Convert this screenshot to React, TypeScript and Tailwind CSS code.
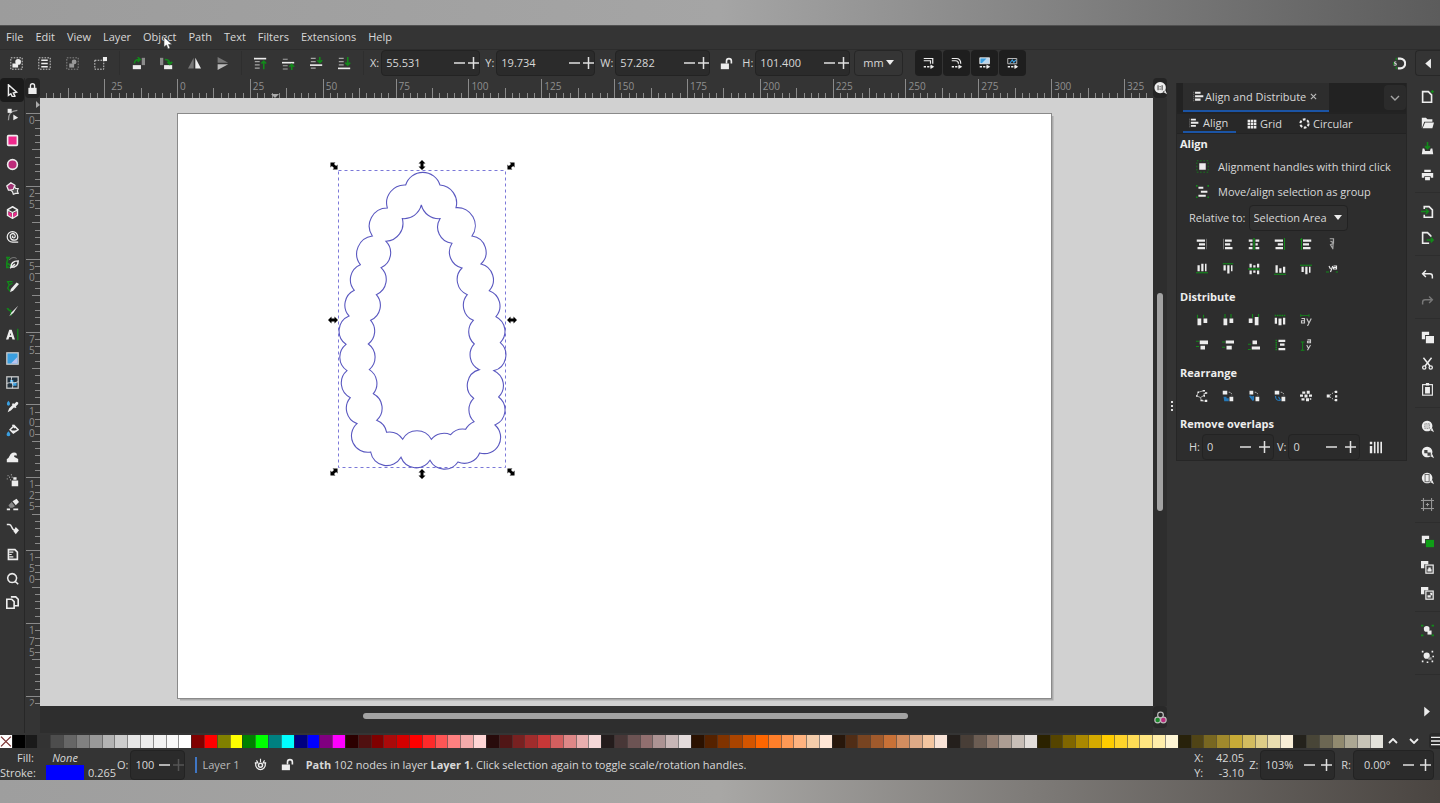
import type { ReactNode } from 'react';

const W = '#ededed';
const G = '#12891a';
const B = '#3a9fe0';
const P = '#f0288c';

const icons: Record<string, ReactNode> = {
  selectAll: (
    <>
      <rect x="1" y="1" width="14" height="14" fill="none" stroke={W} strokeDasharray="2 1.5" />
      <circle cx="10" cy="6" r="3.5" fill={W} />
      <path d="M3 8h7v5H3z" fill={W} />
    </>
  ),
  selectLayers: (
    <>
      <rect x="1" y="1" width="14" height="14" fill="none" stroke={W} strokeDasharray="2 1.5" />
      <path d="M4 3h8v2H4zM4 7h8v2H4zM4 11h8v2H4z" fill={W} />
    </>
  ),
  deselect: (
    <g opacity="0.55">
      <rect x="1" y="1" width="14" height="14" fill="none" stroke={W} strokeDasharray="2 1.5" />
      <circle cx="10" cy="6" r="3" fill={W} />
      <path d="M4 8h6v5H4z" fill={W} />
    </g>
  ),
  touch: (
    <>
      <rect x="1" y="4" width="11" height="11" fill="none" stroke={W} strokeDasharray="2 1.5" />
      <path d="M11 0h5v5h-5z" fill={W} />
    </>
  ),
  rotateLeft: (
    <>
      <path d="M1 10h10v5H1z" fill={W} />
      <path d="M12 1h4v9h-4z" fill="#8a8a8a" />
      <path d="M3 8C3 4 6 3 9 3M7 0l3 3-3 3" fill="none" stroke={G} strokeWidth="2" />
    </>
  ),
  rotateRight: (
    <>
      <path d="M5 10h10v5H5z" fill={W} />
      <path d="M0 1h4v9H0z" fill="#8a8a8a" />
      <path d="M6 3c4 0 6 1 6 5M9 6l3 3 3-3" fill="none" stroke={G} strokeWidth="2" />
    </>
  ),
  flipH: (
    <>
      <path d="M7 1v13H0z" fill="#777" />
      <path d="M9 1v13h7z" fill={W} />
    </>
  ),
  flipV: (
    <>
      <path d="M2 0v7h13z" fill="#777" />
      <path d="M2 16V9h13z" fill="#bbb" />
    </>
  ),
  raiseTop: (
    <>
      <path d="M0 1h15v2H0z" fill={W} />
      <path d="M1 5h6v1.5H1zM1 9h6v1.5H1zM1 13h6v1.5H1z" fill="#a5a5a5" />
      <path d="M12 15V5M9 8l3-3 3 3" fill="none" stroke={G} strokeWidth="2" />
    </>
  ),
  raise: (
    <>
      <path d="M0 6h15v2H0z" fill={W} />
      <path d="M1 2h6v1.5H1zM1 10h6v1.5H1zM1 14h6v1.5H1z" fill="#a5a5a5" />
      <path d="M12 16v-6M9 12l3-3 3 3" fill="none" stroke={G} strokeWidth="2" />
    </>
  ),
  lower: (
    <>
      <path d="M0 9h15v2H0z" fill={W} />
      <path d="M1 1h6v1.5H1zM1 5h6v1.5H1zM1 13h6v1.5H1z" fill="#a5a5a5" />
      <path d="M12 0v7M9 4l3 3 3-3" fill="none" stroke={G} strokeWidth="2" />
    </>
  ),
  lowerBottom: (
    <>
      <path d="M0 13h15v2H0z" fill={W} />
      <path d="M1 1h6v1.5H1zM1 5h6v1.5H1zM1 9h6v1.5H1z" fill="#a5a5a5" />
      <path d="M12 0v10M9 7l3 3 3-3" fill="none" stroke={G} strokeWidth="2" />
    </>
  ),
  unlocked: (
    <>
      <path d="M1 8h10v7H1z" fill={W} />
      <path d="M8 8V5a3 3 0 0 1 6 0v3" fill="none" stroke={W} strokeWidth="2" />
    </>
  ),
  locked: (
    <>
      <path d="M2 7h12v9H2z" fill={W} />
      <path d="M5 8V4a3 3 0 0 1 6 0v4" fill="none" stroke={W} strokeWidth="2" />
    </>
  ),
  scaleStroke: (
    <>
      <path d="M1 2h12v7M1 5h9v4" fill="none" stroke={W} strokeWidth="1.6" />
      <path d="M1 13h10" stroke={W} strokeWidth="2" strokeDasharray="3 1.5" />
      <path d="M10 10l5 3-5 3z" fill={W} />
    </>
  ),
  scaleCorners: (
    <>
      <path d="M1 2h6q6 0 6 7M1 5h5q4 0 4 4" fill="none" stroke={W} strokeWidth="1.6" />
      <path d="M1 13h10" stroke={W} strokeWidth="2" strokeDasharray="3 1.5" />
      <path d="M10 10l5 3-5 3z" fill={W} />
    </>
  ),
  moveGradient: (
    <>
      <path d="M1 1h13v8H1z" fill="#b9d6ee" stroke={W} />
      <path d="M2 2h8L4 8H2z" fill={B} />
      <path d="M1 13h10" stroke={W} strokeWidth="2" strokeDasharray="3 1.5" />
      <path d="M10 10l5 3-5 3z" fill={W} />
    </>
  ),
  movePattern: (
    <>
      <path d="M1 2h12v7H1z" fill="none" stroke="#bbb" strokeWidth="1.3" />
      <path d="M4 8l3-4 2 3 3-3" fill="none" stroke={B} strokeWidth="1.5" />
      <path d="M1 13h10" stroke={W} strokeWidth="2" strokeDasharray="3 1.5" />
      <path d="M10 10l5 3-5 3z" fill={W} />
    </>
  ),
  snap: (
    <>
      <path d="M6 2h3a6 6 0 0 1 0 12H6" fill="none" stroke={W} strokeWidth="2.6" />
      <path d="M4 1v3M4 12v3M1 6v4" stroke={G} strokeWidth="1.5" />
      <path d="M4 6H2v2h2v2H1" fill="none" stroke={W} />
    </>
  ),
  arrowLeft: <path d="M11 2v12L4 8z" fill={W} />,
  arrowRight: <path d="M4 2v12l7-6z" fill={W} />,
  pointer: <path d="M3 1l10 9-4 1 2 4-3 1-2-4-3 2z" fill="none" stroke={W} strokeWidth="1.8" />,
  node: (
    <>
      <path d="M3 15C3 8 5 4 14 3" fill="none" stroke="#999" strokeWidth="1.5" />
      <path d="M2 1h5v5H2z" fill={W} />
      <path d="M9 8l6 4-6 3z" fill={W} />
    </>
  ),
  rect: <rect x="2" y="2" width="12" height="12" rx="1" fill={P} stroke={W} strokeWidth="2" />,
  circle: <circle cx="8" cy="8" r="6" fill="#bd2b7a" stroke={W} strokeWidth="2" />,
  star: (
    <>
      <path d="M6 1l5 3-1 6H3L1 5z" fill="#a13374" stroke={W} strokeWidth="1.6" />
      <path d="M10 6l2 2h3l-1 3 1 3h-3l-3 1-1-3-2-2 3-1z" fill="#555" stroke={W} strokeWidth="1.4" />
    </>
  ),
  box: (
    <>
      <path d="M8 1l6 3.500v7L8 15l-6-3.500v-7z" fill="#333" stroke={W} strokeWidth="2" />
      <path d="M3 7l4 2v5l-4-3zM13 7L9 9v5l4-3z" fill={P} />
      <path d="M2 5l6 3 6-3M8 8v7" fill="none" stroke={W} strokeWidth="1.5" />
    </>
  ),
  spiral: (
    <path
      d="M15 15H8a6.500 6.500 0 1 1 6.500-6.500c0 5-7.500 5.500-9 1s3-6.500 5-4 .5 4.500-1.500 4-1.500-2 0-2"
      fill="none"
      stroke={W}
      strokeWidth="1.5"
    />
  ),
  pen: (
    <>
      <path d="M3 1L1 8v6M0 2h5M0 14h4M2 9l4 3" fill="none" stroke={G} strokeWidth="2" />
      <path d="M6 14c0-6 4-8 9-8 0 5-3 8-9 8zM5 15l6-5" fill="none" stroke={W} strokeWidth="1.8" />
      <path d="M4 5c2-3 6-4 9-2" fill="none" stroke="#999" />
    </>
  ),
  pencil: (
    <>
      <path d="M1 2h7M2 2l2 4-2 4 3 4M4 6l4-2" fill="none" stroke={G} strokeWidth="1.6" />
      <path d="M5 15l1-4 7-8 3 2-7 8z" fill={W} />
    </>
  ),
  brush: (
    <>
      <path d="M1 6c3-1 2 3 4 2s0 5 2 6" fill="none" stroke={G} strokeWidth="1.8" />
      <path d="M4 15l3-5 8-8-6 9z" fill={W} />
    </>
  ),
  text: (
    <>
      <path d="M0 14L4 2h3l4 12H8l-1-3H4l-1 3zM4.700 9h1.600L5.500 6z" fill={W} />
      <path d="M14.500 1v14" stroke={G} strokeWidth="1.5" />
    </>
  ),
  gradient: (
    <>
      <rect x="1" y="1" width="14" height="14" fill={B} stroke="#c9c9c9" strokeWidth="1.6" />
      <path d="M14 6v8H6z" fill="#b9c3ef" />
    </>
  ),
  mesh: (
    <>
      <rect x="1" y="1" width="14" height="14" fill="#22313c" stroke="#c9c9c9" strokeWidth="1.6" />
      <path d="M5 5h4v3h4v4H8V9H5z" fill={B} />
      <path d="M7 1c-2 5 3 9 1 14M1 9c5-2 8 1 14-2" fill="none" stroke={W} />
    </>
  ),
  dropper: (
    <>
      <path d="M3 1c3 3 2 6 0 6S0 4 3 1z" fill={B} />
      <path d="M2 15l2-5 4-4-1-1 2-1 1 1 3-3 2 1v2l-3 3 1 1-2 1-1-1-4 4z" fill={W} />
    </>
  ),
  bucket: (
    <>
      <path d="M3 9c3 3 3 6 0 6s-3-3 0-6z" fill={B} />
      <path d="M5 7l5-5 5 5-6 4zM8 1l3 4" fill="none" stroke={W} strokeWidth="1.8" />
      <path d="M6 8h8l-5 3z" fill={W} />
    </>
  ),
  tweak: <path d="M1 15v-4c4-1 3-8 9-8 3 0 4 2 3 4-3-2-4 1-2 2l4 2v4z" fill={W} />,
  spray: (
    <>
      <path d="M7 8h8v7H7zM9 4h4v3H9z" fill={W} />
      <path d="M2 2h1M6 1h1M4 4h1M1 6h1M5 7h1M7 4h1" stroke="#aaa" strokeWidth="1.8" />
    </>
  ),
  eraser: (
    <>
      <path d="M8 4l5-3 3 4-4 4z" fill={W} />
      <path d="M7 5l4 5-3 2H5L3 9z" fill="#888" />
      <path d="M1 14h4M9 14h6" stroke={W} strokeWidth="2" />
    </>
  ),
  connector: (
    <>
      <path d="M1 3h3c4 0 2 7 7 7" fill="none" stroke={W} strokeWidth="1.8" />
      <path d="M12 6l4 4-4 5-3-4z" fill={W} />
    </>
  ),
  measure: (
    <>
      <path d="M3 2h8l3 3v9H3z" fill="none" stroke={W} strokeWidth="2" />
      <path d="M4 5h5M4 8h3M4 11h5" stroke={W} strokeWidth="1.4" />
    </>
  ),
  zoom: <path d="M7.500 2a5.500 5.500 0 1 0 .1 0zM11 11l4 4" fill="none" stroke={W} strokeWidth="1.9" />,
  pages: <path d="M1 4h6l3 3v8H1zM6 1h6l3 3v8h-4" fill="none" stroke={W} strokeWidth="2" />,
  fileNew: (
    <>
      <path d="M2 2h7l4 4v9H2z" fill="none" stroke={W} strokeWidth="2" />
      <path d="M14 0v4M12 2h4" stroke={G} strokeWidth="1.6" />
    </>
  ),
  open: <path d="M1 2h5l2 2h6v3H4l-3 8zM5 8h11l-2 7H2z" fill={W} />,
  save: (
    <>
      <path d="M2 8h2l1 3h6l1-3h2l1 7H1z" fill={W} />
      <path d="M8 0v8M5 5l3 3 3-3" fill="none" stroke={G} strokeWidth="2" />
    </>
  ),
  print: <path d="M4 2h8v3H4zM1 6h14v6h-3v-2H4v2H1zM5 11h6v4H5z" fill={W} />,
  importFile: (
    <>
      <path d="M4 5V2h6l4 4v9H4v-3" fill="none" stroke={W} strokeWidth="2" />
      <path d="M0 8h9M6 5l3 3-3 3" fill="none" stroke={G} strokeWidth="1.8" />
    </>
  ),
  exportFile: (
    <>
      <path d="M10 15H2V2h6l4 4v1" fill="none" stroke={W} strokeWidth="2" />
      <path d="M7 11h8M12 8l3 3-3 3" fill="none" stroke={G} strokeWidth="1.8" />
    </>
  ),
  undo: <path d="M6 3L2 7l4 4M2 7h9q3 0 3 3v3" fill="none" stroke={W} strokeWidth="1.8" />,
  redo: <path d="M10 3l4 4-4 4M14 7H5q-3 0-3 3v3" fill="none" stroke="#777" strokeWidth="1.8" />,
  copy: <path d="M1 1h9v4H5v5H1zM6 6h10v9H6z" fill={W} />,
  cut: (
    <>
      <path d="M3 1l8 10M13 1L5 11" stroke={W} strokeWidth="1.8" />
      <circle cx="4" cy="13" r="2" fill="none" stroke={W} strokeWidth="1.6" />
      <circle cx="12" cy="13" r="2" fill="none" stroke={W} strokeWidth="1.6" />
    </>
  ),
  paste: (
    <>
      <rect x="2" y="2" width="12" height="13" fill="none" stroke={W} strokeWidth="1.4" />
      <path d="M5 5h6v8H5zM6 0h4v3H6z" fill={W} />
    </>
  ),
  zoomSelection: (
    <>
      <path d="M7.500 1a6.500 6.500 0 1 0 .1 0zM11 12l3-2 2 5z" fill={W} />
      <rect x="4.500" y="4.500" width="6" height="6" fill="#ccc" stroke="#777" strokeDasharray="1 1" />
    </>
  ),
  zoomDrawing: (
    <>
      <path d="M7.500 1a6.500 6.500 0 1 0 .1 0zM11 12l3-2 2 5z" fill={W} />
      <path d="M4 5h4v3h4v4H8V9H4z" fill="#444" />
    </>
  ),
  zoomPage: (
    <>
      <path d="M7.500 1a6.500 6.500 0 1 0 .1 0zM11 12l3-2 2 5z" fill={W} />
      <rect x="5" y="3" width="5" height="9" fill="none" stroke="#555" />
    </>
  ),
  zoomCenter: (
    <g stroke="#999" fill="none" strokeWidth="1.3">
      <rect x="3" y="3" width="10" height="10" />
      <path d="M0 3h3V0M16 3h-3V0M0 13h3v3M16 13h-3v3M8 6v4M6 8h4" />
    </g>
  ),
  duplicate: (
    <>
      <path d="M1 1h9v4H5v5H1z" fill={W} />
      <path d="M6 6h10v9H6z" fill="#0f9d17" />
    </>
  ),
  clone: (
    <>
      <path d="M0 0h9v4H4v5H0z" fill={W} />
      <rect x="6" y="5" width="9" height="10" fill="#444" stroke={W} strokeWidth="1.5" />
      <path d="M8 10h5v3H8zM9 10V8h3v2" fill={W} />
    </>
  ),
  unlinkClone: (
    <>
      <path d="M0 0h9v4H4v5H0z" fill={W} />
      <rect x="6" y="5" width="9" height="10" fill="#444" stroke={W} strokeWidth="1.5" />
      <path d="M8 10h4v3H8zM11 7h3v3h-2z" fill={W} />
    </>
  ),
  group: (
    <>
      <path d="M0 1h3v2H0zM13 1h3v2h-3zM0 13h3v2H0zM13 13h3v2h-3z" fill={G} />
      <circle cx="7" cy="6" r="3.5" fill={W} />
      <path d="M8 8h5v5H8z" fill={W} />
    </>
  ),
  ungroup: (
    <>
      <path d="M1 1h2v2H1zM13 1h2v2h-2zM1 13h2v2H1zM13 13h2v2h-2zM7 14h2v2H7zM14 7h2v2h-2z" fill={W} />
      <circle cx="7" cy="7" r="3.8" fill={W} />
      <path d="M9 9h4v3H9z" fill="#999" />
    </>
  ),
  zoomOne: (
    <>
      <path d="M7.500 0a7 7 0 1 0 .1 0zM11 12l3-2 2 5z" fill={W} />
      <path d="M5 4v6M10 4v6M7.500 5v1.500M7.500 8v1.500" stroke="#444" strokeWidth="1.3" />
    </>
  ),
  cms: (
    <>
      <circle cx="8" cy="5" r="3.5" fill="none" stroke="#bbb" strokeWidth="1.5" />
      <circle cx="4.500" cy="11" r="3.5" fill="#1a8a2a" stroke="#bbb" strokeWidth="1.5" />
      <circle cx="11.500" cy="11" r="3.5" fill="#b92b7c" stroke="#bbb" strokeWidth="1.5" />
    </>
  ),
  align: (
    <>
      <path d="M1 1v14" stroke="#888" strokeDasharray="2 1" />
      <path d="M3 1h8v3H3zM3 6h12v3H3zM3 11h8v3H3z" fill={W} />
    </>
  ),
  grid: <path d="M1 1h4v4H1zM6 1h4v4H6zM11 1h4v4h-4zM1 6h4v4H1zM6 6h4v4H6zM11 6h4v4h-4zM1 11h4v4H1zM6 11h4v4H6zM11 11h4v4h-4z" fill={W} />,
  circular: <circle cx="8" cy="8" r="6" fill="none" stroke={W} strokeWidth="3" strokeDasharray="4 2.280" />,
  thirdClick: (
    <>
      <rect x="1" y="1" width="14" height="14" fill="none" stroke={G} strokeDasharray="2 2" />
      <path d="M4 4h8v8H4z" fill={W} />
    </>
  ),
  asGroup: (
    <>
      <path d="M0 1h2M14 1h2M0 15h2M14 15h2" stroke={G} strokeWidth="2" />
      <path d="M3 2h6v2.500H3zM6 7h8v2.500H6zM3 12h9v2.500H3z" fill={W} />
    </>
  ),
  alRightAnchor: (
    <>
      <path d="M14 1v14" stroke="#777" />
      <path d="M1 2h11v3H1zM4 7h8v3H4zM2 12h10v3H2z" fill={W} />
    </>
  ),
  alLeft: (
    <>
      <path d="M2 1v14" stroke="#888" />
      <path d="M4 2h9v3H4zM4 7h7v3H4zM4 12h10v3H4z" fill={W} />
    </>
  ),
  alCenter: (
    <>
      <path d="M1 2h5v3H1zM10 2h5v3h-5zM3 7h3v3H3zM10 7h3v3h-3zM1 12h5v3H1zM10 12h5v3h-5z" fill={W} />
      <path d="M8 0v16" stroke={G} strokeWidth="2" />
    </>
  ),
  alRight: (
    <>
      <path d="M14 0v16" stroke={G} strokeWidth="1.5" />
      <path d="M1 2h11v3H1zM5 7h7v3H5zM2 12h10v3H2z" fill={W} />
    </>
  ),
  alLeftAnchor: (
    <>
      <path d="M2 0v16M0 2h3" stroke={G} strokeWidth="1.5" />
      <path d="M4 2h11v3H4zM4 7h8v3H4zM4 12h10v3H4z" fill={W} />
    </>
  ),
  baselineV: <path d="M5 1h5v6l-4 2 3 5M10 1L9 15M6 4l3 2" fill="none" stroke="#a8a8a8" strokeWidth="1.6" />,
  alTopAnchor: (
    <>
      <path d="M0 13h16" stroke={G} strokeWidth="1.5" />
      <path d="M2 3h3v8H2zM7 1h3v10H7zM12 1h2v10h-2z" fill={W} />
    </>
  ),
  alTop: (
    <>
      <path d="M1 1h14" stroke={G} strokeWidth="1.5" />
      <path d="M2 3h3v7H2zM7 3h3v11H7zM12 3h2v8h-2z" fill={W} />
    </>
  ),
  alMiddle: (
    <>
      <path d="M2 1h3v5H2zM7 3h3v3H7zM12 1h3v5h-3zM2 10h3v5H2zM7 10h3v3H7zM12 10h3v5h-3z" fill={W} />
      <path d="M0 8h16" stroke={G} strokeWidth="2" />
    </>
  ),
  alBottom: (
    <>
      <path d="M0 15h16" stroke={G} strokeWidth="1.5" />
      <path d="M2 3h3v10H2zM7 7h3v6H7zM12 5h3v8h-3z" fill={W} />
    </>
  ),
  alBottomAnchor: (
    <>
      <path d="M0 3h16" stroke={G} strokeWidth="1.5" />
      <path d="M2 5h3v7H2zM7 5h3v10H7zM12 5h2v8h-2z" fill={W} />
    </>
  ),
  baselineH: (
    <>
      <path d="M0 12h4M13 12h3" stroke={G} strokeWidth="1.5" />
      <path d="M4 4l2 4M9 4l-3 8M10 4h4v4h-4V6h4" fill="none" stroke={W} strokeWidth="1.5" />
    </>
  ),
  distLeft: (
    <>
      <path d="M2 1v5M10 1v4" stroke={G} strokeWidth="1.5" />
      <path d="M2 6h5v9H2zM10 6h5v6h-5z" fill={W} />
    </>
  ),
  distCenter: (
    <>
      <path d="M4 0v5M12 0v5" stroke={G} strokeWidth="1.5" />
      <path d="M2 6h5v9H2zM10 6h5v6h-5z" fill={W} />
    </>
  ),
  distRight: (
    <>
      <path d="M6 0v5M14 0v4" stroke={G} strokeWidth="1.5" />
      <path d="M1 6h5v6H1zM9 4h5v11H9z" fill={W} />
    </>
  ),
  distGap: (
    <>
      <path d="M1 2h14" stroke={G} strokeWidth="2" strokeDasharray="2 1" />
      <path d="M1 5h3v8H1zM6 6h4v9H6zM12 5h3v9h-3z" fill={W} />
    </>
  ),
  distTextH: (
    <>
      <path d="M1 2h11M1 0v4M12 0v4" stroke={G} />
      <path d="M2 6h4v6H2V9h4M9 6l3 6M15 6l-5 10" fill="none" stroke="#c9c9c9" strokeWidth="1.5" />
    </>
  ),
  distTop: (
    <>
      <path d="M0 3h4M0 10h4" stroke={G} strokeWidth="1.3" />
      <path d="M5 2h11v5H5zM6 9h6v5H6z" fill={W} />
    </>
  ),
  distMiddle: (
    <>
      <path d="M0 4h4M0 11h4" stroke={G} strokeWidth="1.3" />
      <path d="M5 2h11v4H5zM6 9h7v5H6z" fill={W} />
    </>
  ),
  distBottom: (
    <>
      <path d="M0 7h4M0 14h4" stroke={G} strokeWidth="1.3" />
      <path d="M6 2h6v5H6zM5 10h11v4H5z" fill={W} />
    </>
  ),
  distGapV: (
    <>
      <path d="M3 1v14" stroke={G} strokeWidth="2" strokeDasharray="2 1" />
      <path d="M6 1h9v3H6zM8 6h6v3H8zM6 12h9v3H6z" fill={W} />
    </>
  ),
  distTextV: (
    <>
      <path d="M1 4h5M1 15h5M3.500 4v11" stroke={G} strokeWidth="1.3" />
      <path d="M10 1h4v4h-4V3h4M9 8l2 4M14 8l-4 7" fill="none" stroke="#c9c9c9" strokeWidth="1.5" />
    </>
  ),
  network: (
    <>
      <path d="M3 3l7-2M3 3L1 8l5 2M10 5l4-1M6 10l1 4 6 1M6 10l5-3" fill="none" stroke="#bbb" strokeWidth="1.2" />
      <path d="M2 2h2v2H2zM9 0h3v2H9zM0 7h2v2H0zM12 3h3v2h-3zM10 6h2v3h-2zM6 13h3v2H6zM12 13h3v3h-3z" fill={W} />
    </>
  ),
  swapSelection: (
    <>
      <path d="M1 1h6v5H1zM10 9h5v6h-5z" fill={W} />
      <path d="M2 9h4v2h3v4H3z" fill="#2578b8" />
      <path d="M9 3q4 0 4 4" fill="none" stroke={W} strokeDasharray="2 1" />
    </>
  ),
  swapZ: (
    <>
      <path d="M2 1h5v5H2zM10 9h5v6h-5z" fill={W} />
      <path d="M2 8l4 2M3 9l4 5M7 8v6" stroke="#2578b8" strokeWidth="2" />
      <path d="M9 3q4 0 4 4" fill="none" stroke={W} strokeDasharray="2 1" />
    </>
  ),
  swapClockwise: (
    <>
      <path d="M1 1h6v5H1zM10 9h5v6h-5z" fill={W} />
      <path d="M2 8c0 5 2 6 6 6M6 9l3 5" fill="none" stroke="#2578b8" strokeWidth="1.6" />
      <path d="M9 3q4 0 4 4" fill="none" stroke={W} strokeDasharray="2 1" />
    </>
  ),
  randomize: (
    <path d="M3 2h4v3H3zM9 1h4v4H9zM0 6h4v3H0zM6 6h4v4H6zM12 6h4v3h-4zM2 11h4v3H2zM8 11h4v4H8zM13 11h2v2h-2z" fill={W} />
  ),
  unclump: (
    <>
      <path d="M1 6h4v4H1zM12 1h3v3h-3zM12 7h3v3h-3zM12 12h3v3h-3z" fill={W} />
      <path d="M5 7l7-5M5 9l7 5" stroke={W} strokeDasharray="2 1.5" />
    </>
  ),
  overlaps: <path d="M1 1h3v3H1zM1 6h3v9H1zM6 1h2v14H6zM10 1h2v14h-2zM14 1h2v14h-2z" fill={W} />,
  eye: (
    <>
      <path d="M2 6c-1 11 13 11 12 0" fill="none" stroke={W} strokeWidth="1.6" />
      <circle cx="8" cy="9" r="2.5" fill="none" stroke={W} strokeWidth="1.8" />
      <path d="M8 1v4M3 3l2 3M13 3l-2 3M1 6h4M11 6h4" stroke={W} strokeWidth="1.4" />
    </>
  ),
};

function Icon({ name, className = 'size-[13px]' }: { name: string; className?: string }) {
  return (
    <svg viewBox="0 0 16 16" className={`shrink-0 ${className}`} aria-hidden="true">
      {icons[name]}
    </svg>
  );
}

function IconButton({ name, className }: { name: string; className: string }) {
  return (
    <button type="button" aria-label={name} className={`flex shrink-0 items-center justify-center ${className}`}>
      <Icon name={name} />
    </button>
  );
}

interface NumberFieldProps {
  id: string;
  label: string;
  value: string;
  className: string;
  stepper: string;
  height?: string;
  dimPlus?: boolean;
}

function NumberField({ id, label, value, className, stepper, height = 'h-[26px]', dimPlus }: NumberFieldProps) {
  return (
    <div className="flex shrink-0 items-center gap-[2px]">
      <label htmlFor={id}>{label}</label>
      <div className={`flex rounded border border-[#232323] bg-[#2b2b2b] ${height} ${className}`}>
        <input id={id} defaultValue={value} className="w-0 min-w-0 flex-1 bg-transparent pl-1 outline-none" />
        <button type="button" aria-label={`Decrease ${label}`} className={`flex items-center justify-center ${stepper}`}>
          <svg viewBox="0 0 12 12" className="size-3">
            <path d="M0 6h11" stroke="#e0e0e0" strokeWidth="1.5" />
          </svg>
        </button>
        <button type="button" aria-label={`Increase ${label}`} className={`flex items-center justify-center ${stepper}`}>
          <svg viewBox="0 0 12 12" className="size-3">
            <path d="M1 6h11M6.500 0v12" stroke={dimPlus ? '#555' : '#e0e0e0'} strokeWidth="1.5" />
          </svg>
        </button>
      </div>
    </div>
  );
}

const menus = ['File', 'Edit', 'View', 'Layer', 'Object', 'Path', 'Text', 'Filters', 'Extensions', 'Help'];

function MenuBar() {
  return (
    <nav className="flex h-6 shrink-0 items-center gap-3 border-t border-[#505050] px-[6px] pb-[2px]">
      {menus.map((menu) => (
        <button key={menu} type="button" className="relative">
          {menu}
          {menu === 'Object' && (
            <svg viewBox="0 0 10 14" className="absolute top-[7px] left-[20px] h-[14px] w-[10px]">
              <path d="M1 1v10l2.500-2 1.500 4 2-1-1.500-3.500H9z" fill="#fff" stroke="#444" strokeWidth="0.6" />
            </svg>
          )}
        </button>
      ))}
    </nav>
  );
}

const toolbarGroups = [
  ['selectAll', 'selectLayers', 'deselect', 'touch'],
  ['rotateLeft', 'rotateRight', 'flipH', 'flipV'],
  ['raiseTop', 'raise', 'lower', 'lowerBottom'],
];

function Toolbar() {
  return (
    <div className="flex h-[29px] shrink-0 items-center border-t border-[#2c2c2c] pb-[2px] pl-[2px]">
      {toolbarGroups.map((group) => (
        <div key={group[0]} className="flex items-center">
          {group.map((name) => (
            <IconButton key={name} name={name} className="h-6 w-7" />
          ))}
          <div className="mr-1 ml-[5px] h-6 w-px bg-[#2e2e2e]" />
        </div>
      ))}
      <div className="flex items-center gap-[5px] pl-[2px]">
        <NumberField id="pos-x" label="X:" value="55.531" className="w-[99px]" stepper="w-[13px]" />
        <NumberField id="pos-y" label="Y:" value="19.734" className="w-[99px]" stepper="w-[13px]" />
        <NumberField id="size-w" label="W:" value="57.282" className="w-[95px]" stepper="w-[13px]" />
      </div>
      <IconButton name="unlocked" className="h-6 w-8" />
      <NumberField id="size-h" label="H:" value="101.400" className="w-[95px]" stepper="w-[13px]" />
      <div className="relative ml-1 h-[26px] w-[49px]">
        <select aria-label="Unit" className="size-full appearance-none rounded border border-[#262626] bg-[#353535] pl-2 outline-none">
          <option>mm</option>
        </select>
        <svg viewBox="0 0 8 5" className="pointer-events-none absolute top-[10px] right-[9px] h-[5px] w-2">
          <path d="M0 0h8L4 5z" fill={W} />
        </svg>
      </div>
      <div className="ml-3 flex gap-px">
        {['scaleStroke', 'scaleCorners', 'moveGradient', 'movePattern'].map((name) => (
          <button key={name} type="button" aria-label={name} className="flex h-[26px] w-[27px] items-center justify-center rounded bg-[#1e1e1e]">
            <Icon name={name} className="size-3" />
          </button>
        ))}
      </div>
      <IconButton name="snap" className="mr-1 ml-auto h-6 w-6" />
      <IconButton name="arrowLeft" className="h-[26px] w-[25px] rounded-l border border-r-0 border-[#272727]" />
    </div>
  );
}

const toolGroups = [
  ['pointer', 'node'],
  ['rect', 'circle', 'star', 'box', 'spiral'],
  ['pen', 'pencil', 'brush', 'text', 'gradient', 'mesh', 'dropper', 'bucket'],
  ['tweak', 'spray', 'eraser', 'connector'],
  ['measure', 'zoom', 'pages'],
];

function ToolBox() {
  return (
    <aside className="flex w-[25px] shrink-0 flex-col gap-[2px] border-r border-[#272727]">
      {toolGroups.map((group) => (
        <div key={group[0]} className="flex flex-col">
          {group.map((name) => (
            <IconButton key={name} name={name} className={name === 'pointer' ? 'h-6 rounded bg-[#1b1b1b]' : 'h-6'} />
          ))}
        </div>
      ))}
    </aside>
  );
}

// 25 user units between two major marks
const MAJOR = 72.85;

function TopRuler() {
  const ticks = Array.from({ length: 153 }, (_, i) => i - 18);
  return (
    <svg className="size-full overflow-hidden">
      {ticks.map((i) => {
        const x = Math.round(137 + (i * MAJOR) / 10) + 0.5;
        const top = i % 10 === 0 ? 1 : i % 5 === 0 ? 10 : 15;
        return <path key={i} d={`M${x} ${top}V20`} stroke="#8a8a8a" />;
      })}
      {ticks
        .filter((i) => i % 10 === 0)
        .map((i) => (
          <text key={i} x={140 + (i * MAJOR) / 10 + (i < 0 ? 4 : 0)} y="12" fontSize="10" fill="#8f8f8f">
            {Math.abs(i * 2.5)}
          </text>
        ))}
      <path d="M231 16h8l-4 4z" fill="#aaa" />
    </svg>
  );
}

function SideRuler() {
  const ticks = Array.from({ length: 82 }, (_, i) => i);
  return (
    <svg className="size-full overflow-hidden">
      <path d="M11 3v7l4-3z" fill="#aaa" />
      {ticks.map((i) => {
        const y = Math.round(15 + (i * MAJOR) / 10) + 0.5;
        const left = i % 10 === 0 ? 1 : i % 5 === 0 ? 7 : 10;
        return <path key={i} d={`M${left} ${y}H15`} stroke="#8a8a8a" />;
      })}
      {ticks
        .filter((i) => i % 10 === 0)
        .map((i) =>
          String(i * 2.5)
            .slice(0, i === 80 ? 1 : 3)
            .split('')
            .map((digit, n) => (
              <text key={`${i}-${n}`} x="4" y={26 + (i * MAJOR) / 10 + n * 11} fontSize="10" fill="#8f8f8f">
                {digit}
              </text>
            )),
        )}
    </svg>
  );
}

// cusps of the two scalloped outlines, in thirds of a pixel
const outer = [
  [257, 105], [360, 105], [408, 173], [456, 258], [483, 342], [508, 422], [528, 500], [541, 578], [522, 662],
  [536, 741], [525, 825], [479, 909], [414, 936], [330, 931], [243, 922], [152, 906], [111, 821], [91, 743],
  [81, 662], [78, 583], [87, 498], [103, 421], [121, 344], [157, 258], [202, 174],
];
const inner = [
  [304, 165], [360, 206], [396, 280], [426, 354], [442, 434], [460, 511], [463, 582], [478, 659], [461, 745],
  [462, 815], [437, 838], [392, 854], [334, 868], [248, 868], [200, 847], [170, 811], [160, 731], [148, 659],
  [145, 582], [152, 511], [169, 434], [183, 353], [198, 274], [247, 206],
];

function scallop(points: number[][], sweep: number) {
  const [start, ...rest] = points;
  const arcs = [...rest, start].map(([x, y]) => {
    const r = y < 270 ? 54 : 49;
    return `A${r} ${r} 0 0 ${sweep} ${x} ${y}`;
  });
  return `M${start.join(' ')}${arcs.join('')}Z`;
}

const handles = [
  [294, 68, 45], [382, 67, 90], [471, 68, -45],
  [293, 222, 0], [472, 222, 0],
  [294, 374, -45], [382, 376, 90], [471, 374, 45],
];

function Canvas() {
  return (
    <svg className="absolute inset-0 size-full overflow-hidden bg-[#d1d1d1]">
      <path d="M140 601h872V18" fill="none" stroke="#a9a9a9" strokeWidth="3" />
      <rect x="137.500" y="15.500" width="874" height="585" fill="#fff" stroke="#8a8a8a" />
      <rect x="298.500" y="72.500" width="167" height="297" fill="none" stroke="#7b78d8" strokeDasharray="3 3" />
      <g transform="translate(280 52) scale(0.3333)" fill="none" stroke="#5a58c0" strokeWidth="3.3">
        <path d={scallop(outer, 1)} />
        <path d={scallop(inner, 0)} />
      </g>
      {handles.map(([x, y, angle]) => (
        <path
          key={`${x}-${y}`}
          d="M-5 0l3.500-3.500v2h3v-2L5 0 1.500 3.500v-2h-3v2z"
          transform={`translate(${x} ${y}) rotate(${angle})`}
          fill="#000"
        />
      ))}
    </svg>
  );
}

function Editor() {
  return (
    <main className="grid min-w-0 flex-1 grid-cols-[15px_minmax(0,1fr)_14px] grid-rows-[20px_minmax(0,1fr)_27px]">
      <div className="flex items-center justify-center rounded bg-[#242424]">
        <Icon name="locked" className="size-[11px]" />
      </div>
      <TopRuler />
      <div className="flex items-center justify-center rounded bg-[#242424]">
        <Icon name="zoomOne" />
      </div>
      <SideRuler />
      <div className="relative">
        <Canvas />
      </div>
      <div className="flex flex-col items-center bg-[#2e2e2e]">
        <div className="h-[32%]" />
        <div className="h-[36%] w-[6px] rounded-full bg-[#a3a3a3]" />
      </div>
      <div />
      <div className="flex bg-[#2e2e2e] pt-[7px]">
        <div className="w-[29%]" />
        <div className="h-[6px] w-[49%] rounded-full bg-[#a3a3a3]" />
      </div>
      <div className="flex h-[22px] items-center justify-center rounded bg-[#292929]">
        <Icon name="cms" />
      </div>
    </main>
  );
}

function Heading({ children }: { children: ReactNode }) {
  return <h2 className="flex h-[26px] items-center pt-[6px] pl-[3px] font-bold text-[#eee]">{children}</h2>;
}

function IconRow({ names }: { names: string[] }) {
  return (
    <div className="flex h-[25px] items-center pl-3">
      {names.map((name) => (
        <button key={name} type="button" aria-label={name} className="flex h-6 w-[26px] items-center justify-center">
          <Icon name={name} className="size-3" />
        </button>
      ))}
    </div>
  );
}

function Dock() {
  return (
    <section className="mt-[5px] w-[231px] shrink-0 self-start border border-t-0 border-[#262626] bg-[#2d2d2d]">
      <div className="flex h-[29px] items-stretch justify-between bg-[#222] pl-[6px]">
        <div className="flex w-[146px] items-center border-b-2 border-[#1b54a5] bg-[#2d2d2d] pl-[10px]">
          <Icon name="align" className="size-[11px]" />
          <span className="pl-px">Align and Distribute</span>
          <button type="button" aria-label="Close" className="pl-1">
            <svg viewBox="0 0 8 8" className="size-[7px]">
              <path d="M1 1l6 6M7 1L1 7" stroke="#bbb" strokeWidth="1.3" />
            </svg>
          </button>
        </div>
        <button type="button" aria-label="Dialog menu" className="my-[2px] flex w-[22px] items-center justify-center rounded bg-[#2b2b2b]">
          <svg viewBox="0 0 10 6" className="h-[6px] w-[10px]">
            <path d="M1 1l4 4 4-4" fill="none" stroke="#a5a5a5" strokeWidth="1.4" />
          </svg>
        </button>
      </div>
      <div className="flex h-[22px] border-t-2 border-b border-[#232323] bg-[#282828] pl-[6px]">
        <button type="button" className="flex w-[53px] items-center gap-1 border-b-2 border-[#1b54a5] pl-[6px]">
          <Icon name="align" className="size-[10px]" />
          Align
        </button>
        <button type="button" className="flex items-center gap-[3px] pl-[11px]">
          <Icon name="grid" className="size-[10px]" />
          Grid
        </button>
        <button type="button" className="flex items-center gap-[3px] pl-[17px]">
          <Icon name="circular" className="size-[11px]" />
          Circular
        </button>
      </div>
      <h2 className="flex h-5 items-center pl-[3px] font-bold text-[#eee]">Align</h2>
      <button type="button" className="flex h-[25px] items-center pl-[13px]">
        <span className="flex w-7 pl-[6px]">
          <Icon name="thirdClick" />
        </span>
        Alignment handles with third click
      </button>
      <button type="button" className="flex h-[25px] items-center pl-[13px]">
        <span className="flex w-7 pl-[6px]">
          <Icon name="asGroup" />
        </span>
        Move/align selection as group
      </button>
      <div className="flex h-[27px] items-center gap-[3px] pl-3">
        <label htmlFor="relative-to">Relative to:</label>
        <div className="relative h-[26px] w-[99px]">
          <select id="relative-to" className="size-full appearance-none rounded border border-[#222] bg-[#303030] pl-1 outline-none">
            <option>Selection Area</option>
          </select>
          <svg viewBox="0 0 8 5" className="pointer-events-none absolute top-[10px] right-[6px] h-[5px] w-2">
            <path d="M0 0h8L4 5z" fill={W} />
          </svg>
        </div>
      </div>
      <IconRow names={['alRightAnchor', 'alLeft', 'alCenter', 'alRight', 'alLeftAnchor', 'baselineV']} />
      <IconRow names={['alTopAnchor', 'alTop', 'alMiddle', 'alBottom', 'alBottomAnchor', 'baselineH']} />
      <Heading>Distribute</Heading>
      <IconRow names={['distLeft', 'distCenter', 'distRight', 'distGap', 'distTextH']} />
      <IconRow names={['distTop', 'distMiddle', 'distBottom', 'distGapV', 'distTextV']} />
      <Heading>Rearrange</Heading>
      <IconRow names={['network', 'swapSelection', 'swapZ', 'swapClockwise', 'randomize', 'unclump']} />
      <Heading>Remove overlaps</Heading>
      <div className="flex h-[26px] items-center gap-[3px] pl-3">
        <NumberField id="gap-h" label="H:" value="0" className="w-[72px]" stepper="w-[18px]" />
        <NumberField id="gap-v" label="V:" value="0" className="w-[72px]" stepper="w-[18px]" />
        <IconButton name="overlaps" className="h-6 w-6" />
      </div>
    </section>
  );
}

const commandGroups = [
  ['fileNew', 'open', 'save', 'print'],
  ['importFile', 'exportFile'],
  ['undo', 'redo'],
  ['copy', 'cut', 'paste'],
  ['zoomSelection', 'zoomDrawing', 'zoomPage', 'zoomCenter'],
  ['duplicate', 'clone', 'unlinkClone'],
  ['group', 'ungroup'],
];

function CommandBar() {
  return (
    <aside className="ml-2 flex w-[25px] shrink-0 flex-col pt-[5px]">
      {commandGroups.map((group) => (
        <div key={group[0]} className="mb-[5px] flex flex-col border-b border-[#2d2d2d] pb-[5px]">
          {group.map((name) => (
            <IconButton key={name} name={name} className="h-[26px]" />
          ))}
        </div>
      ))}
      <IconButton name="arrowRight" className="mt-auto mb-[10px] h-6" />
    </aside>
  );
}

const palette = (
  '000000 1a1a1a 333333 4d4d4d 666666 808080 999999 b3b3b3 cccccc e6e6e6 ececec f2f2f2 f9f9f9 ffffff ' +
  '800000 ff0000 808000 ffff00 008000 00ff00 008080 00ffff 000080 0000ff 800080 ff00ff ' +
  '2b0000 501010 800000 aa0a0a d40000 ff0000 ff2a2a ff5555 ff8080 f4aaaa ffd5d5 ' +
  '280b0b 501616 782121 a02c2c c83737 d35f5f de8787 e9afaf f4d7d7 ' +
  '241c1c 483737 6c5353 916f6f ac9393 c8b7b7 e3dbdb ' +
  '2b1100 552200 803300 aa4400 d45500 ff6600 ff7f2a ff9955 ffb380 f4ccaa ffe6d5 ' +
  '28170b 502d16 784421 a05a2c c87137 d38d5f deaa87 f4c6a0 f9e3d7 ' +
  '241f1c 483e37 6c5d53 917c6f ac9d93 c8beb7 e3dedb ' +
  '2b2200 554400 806600 aa8800 d4aa00 ffcc00 ffd42a ffdd55 ffe680 ffeeaa fff6d5 ' +
  '28220b 504416 786721 a0892c c8ab37 d3bc5f decd87 e9ddaf f9eed7 ' +
  '24221c 484537 6c6753 918a6f aca793 c8c4b7 e3e2db'
).split(' ');

function Palette() {
  return (
    <div className="flex h-4 shrink-0 items-center">
      <div className="flex h-[13px] min-w-0 flex-1">
        <button type="button" aria-label="No paint" className="min-w-0 flex-1 bg-white">
          <svg viewBox="0 0 12 12" className="size-full">
            <path d="M1 1l10 10M11 1L1 11" stroke="#7a3030" strokeWidth="1.3" />
          </svg>
        </button>
        {palette.map((color, i) => (
          <button
            key={i}
            type="button"
            aria-label={`#${color}`}
            className="min-w-0 flex-1 border-l border-[#33333388]"
            style={{ backgroundColor: `#${color}` }}
          />
        ))}
      </div>
      <div className="flex w-[58px] items-center justify-between pl-[6px]">
        <button type="button" aria-label="Scroll up">
          <svg viewBox="0 0 10 6" className="h-[6px] w-[10px]">
            <path d="M1 5l4-4 4 4" fill="none" stroke={W} strokeWidth="1.8" />
          </svg>
        </button>
        <button type="button" aria-label="Scroll down">
          <svg viewBox="0 0 10 6" className="h-[6px] w-[10px]">
            <path d="M1 1l4 4 4-4" fill="none" stroke={W} strokeWidth="1.8" />
          </svg>
        </button>
        <button type="button" aria-label="Palette menu" className="flex h-4 items-center rounded-l bg-[#292929] pl-[2px]">
          <svg viewBox="0 0 10 10" className="h-[10px] w-[9px]">
            <path d="M0 1h10M0 5h10M0 9h10" stroke={W} strokeWidth="1.5" />
          </svg>
        </button>
      </div>
    </div>
  );
}

function StatusBar() {
  return (
    <footer className="flex h-[31px] shrink-0 items-center">
      <div className="grid w-[117px] grid-cols-[34px_38px_1fr] gap-x-3 leading-[15px]">
        <span className="text-right">Fill:</span>
        <span className="text-center italic">None</span>
        <span />
        <span className="text-right">Stroke:</span>
        <button type="button" aria-label="Stroke colour" className="h-[15px] bg-[#0000ff]" />
        <span className="-ml-2">0.265</span>
      </div>
      <NumberField id="opacity" label="O:" value="100" className="w-[55px]" stepper="w-[13px]" height="h-[30px]" dimPlus />
      <div className="ml-[10px] h-4 w-[2px] bg-[#3f76c4]" />
      <button type="button" className="ml-[5px] text-[#bbb]">Layer 1</button>
      <IconButton name="eye" className="ml-[10px] h-6 w-[22px]" />
      <IconButton name="unlocked" className="h-6 w-8" />
      <p className="truncate pl-[2px]">
        <b>Path</b> 102 nodes in layer <b>Layer 1</b>. Click selection again to toggle scale/rotation handles.
      </p>
      <div className="ml-auto grid grid-cols-[14px_36px] pr-[5px] leading-[15px]">
        <span>X:</span>
        <span className="text-right">42.05</span>
        <span>Y:</span>
        <span className="text-right">-3.10</span>
      </div>
      <NumberField id="zoom-level" label="Z:" value="103%" className="w-[75px]" stepper="w-[16px]" height="h-[30px]" />
      <div className="pr-[6px] pl-[6px]">
        <NumberField id="rotation" label="R:" value="0.00°" className="w-[81px] pl-[6px]" stepper="w-[16px]" height="h-[30px]" />
      </div>
    </footer>
  );
}

export default function App() {
  return (
    <div className="flex h-screen flex-col bg-[#343434] font-['Open_Sans','Noto_Sans',sans-serif] text-[11px] leading-4 text-[#d8d8d8]">
      <div className="h-[25px] shrink-0 bg-linear-to-r from-[#9c9c9c] via-[#a5a5a5] to-[#5c5c5c]" />
      <MenuBar />
      <Toolbar />
      <div className="flex min-h-0 flex-1">
        <ToolBox />
        <Editor />
        <div className="flex w-[9px] shrink-0 flex-col items-center justify-center gap-[2px]">
          <div className="size-[2px] bg-[#ddd]" />
          <div className="size-[2px] bg-[#ddd]" />
          <div className="size-[2px] bg-[#ddd]" />
        </div>
        <Dock />
        <CommandBar />
      </div>
      <Palette />
      <StatusBar />
      <div className="h-[23px] shrink-0 bg-linear-to-r from-[#9e9e9e] via-[#a8a7a5] via-50% to-[#4a4541]" />
    </div>
  );
}
